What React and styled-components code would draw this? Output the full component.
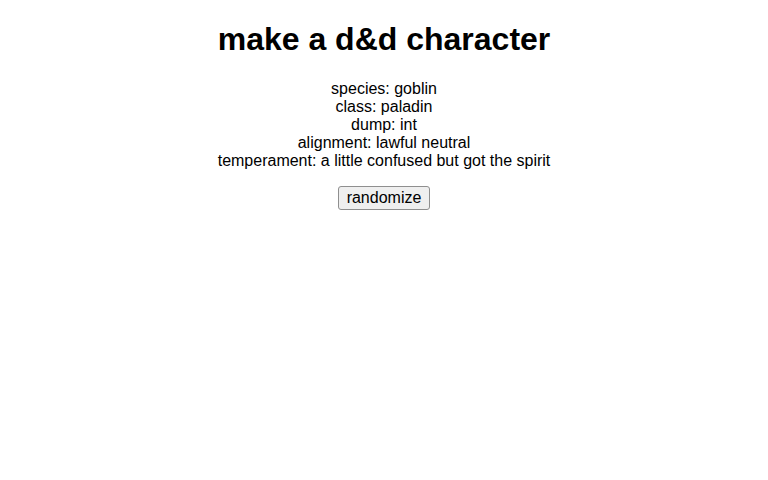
import React, { useState } from "react";
import styled, { createGlobalStyle } from "styled-components";

const GlobalStyle = createGlobalStyle`
  html, body {
    margin: 0;
    padding: 0;
    background: #ffffff;
  }
  body {
    font-family: "Liberation Sans", Arial, sans-serif;
    color: #000000;
  }
`;

const Page = styled.main`
  display: flex;
  flex-direction: column;
  align-items: center;
  text-align: center;
`;

const Title = styled.h1`
  font-size: 32px;
  font-weight: bold;
  margin: 21.44px 0;
`;

const Traits = styled.div`
  display: flex;
  flex-direction: column;
  align-items: center;
  font-size: 16px;
  line-height: normal;
`;

const Trait = styled.div``;

const RollButton = styled.button`
  margin-top: 16px;
  font-family: "Liberation Sans", Arial, sans-serif;
  font-size: 16px;
  line-height: normal;
  color: #000000;
  background: #efefef;
  border: 1px solid #8f8f8f;
  border-radius: 3px;
  padding: 2px 7.5px;
  cursor: pointer;
`;

const options = {
  species: ["goblin", "elf", "dwarf", "tiefling", "halfling", "human"],
  class: ["paladin", "wizard", "rogue", "bard", "cleric", "fighter"],
  dump: ["int", "str", "dex", "con", "wis", "cha"],
  alignment: ["lawful neutral", "chaotic good", "true neutral", "lawful good"],
  temperament: [
    "a little confused but got the spirit",
    "grumpy but loyal",
    "overly enthusiastic",
  ],
};

const pick = (list) => list[Math.floor(Math.random() * list.length)];

export default function App() {
  const [hero, setHero] = useState({
    species: "goblin",
    class: "paladin",
    dump: "int",
    alignment: "lawful neutral",
    temperament: "a little confused but got the spirit",
  });

  const randomize = () =>
    setHero(
      Object.fromEntries(
        Object.entries(options).map(([key, list]) => [key, pick(list)])
      )
    );

  return (
    <>
      <GlobalStyle />
      <Page>
        <Title>make a d&amp;d character</Title>
        <Traits>
          {Object.entries(hero).map(([key, value]) => (
            <Trait key={key}>
              {key}: {value}
            </Trait>
          ))}
        </Traits>
        <RollButton onClick={randomize}>randomize</RollButton>
      </Page>
    </>
  );
}
